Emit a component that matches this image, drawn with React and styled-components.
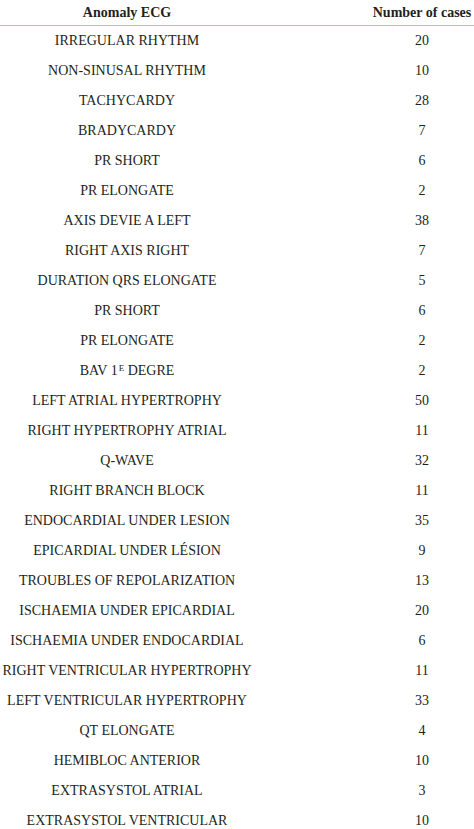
import React from 'react';
import styled, { createGlobalStyle } from 'styled-components';

const GlobalStyle = createGlobalStyle`
  html, body {
    margin: 0;
    padding: 0;
    background: #ffffff;
    overflow: hidden;
  }
`;

const Table = styled.div`
  width: 476px;
  padding-top: 1px;
  font-family: "Liberation Serif", "DejaVu Serif", serif;
  color: #231f20;
`;

const Head = styled.div`
  display: grid;
  grid-template-columns: 254px 114px 108px;
  height: 24px;
  align-items: center;
  border-bottom: 1px solid #d9aeae;
  font-weight: bold;
  font-size: 14px;
  white-space: nowrap;
`;

const Row = styled.div`
  display: grid;
  grid-template-columns: 254px 114px 108px;
  height: 30px;
  align-items: center;
  font-size: 14px;
  white-space: nowrap;
`;

const Cell = styled.div`
  grid-column: ${(p) => (p.$num ? 3 : 1)};
  display: flex;
  justify-content: center;
  align-items: baseline;
`;

const Sup = styled.span`
  font-size: 9px;
  position: relative;
  top: -4px;
  margin-left: 1px;
`;

const rows = [
  ['IRREGULAR RHYTHM', 20],
  ['NON-SINUSAL RHYTHM', 10],
  ['TACHYCARDY', 28],
  ['BRADYCARDY', 7],
  ['PR SHORT', 6],
  ['PR ELONGATE', 2],
  ['AXIS DEVIE A LEFT', 38],
  ['RIGHT AXIS RIGHT', 7],
  ['DURATION QRS ELONGATE', 5],
  ['PR SHORT', 6],
  ['PR ELONGATE', 2],
  [
    <>
      BAV 1<Sup>E</Sup>&nbsp;DEGRE
    </>,
    2,
  ],
  ['LEFT ATRIAL HYPERTROPHY', 50],
  ['RIGHT HYPERTROPHY ATRIAL', 11],
  ['Q-WAVE', 32],
  ['RIGHT BRANCH BLOCK', 11],
  ['ENDOCARDIAL UNDER LESION', 35],
  ['EPICARDIAL UNDER LÉSION', 9],
  ['TROUBLES OF REPOLARIZATION', 13],
  ['ISCHAEMIA UNDER EPICARDIAL', 20],
  ['ISCHAEMIA UNDER ENDOCARDIAL', 6],
  ['RIGHT VENTRICULAR HYPERTROPHY', 11],
  ['LEFT VENTRICULAR HYPERTROPHY', 33],
  ['QT ELONGATE', 4],
  ['HEMIBLOC ANTERIOR', 10],
  ['EXTRASYSTOL ATRIAL', 3],
  ['EXTRASYSTOL VENTRICULAR', 10],
];

export default function App() {
  return (
    <>
      <GlobalStyle />
      <Table>
        <Head>
          <Cell>Anomaly ECG</Cell>
          <Cell $num>Number of cases</Cell>
        </Head>
        {rows.map(([label, n], i) => (
          <Row key={i}>
            <Cell>{label}</Cell>
            <Cell $num>{n}</Cell>
          </Row>
        ))}
      </Table>
    </>
  );
}
